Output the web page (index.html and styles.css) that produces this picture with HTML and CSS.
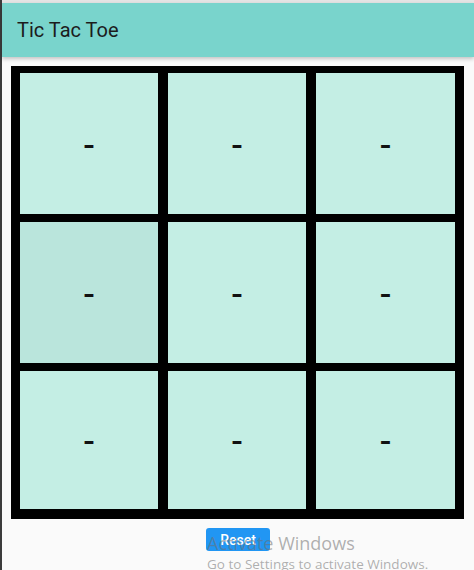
FILE: index.html
```html
<!DOCTYPE html>
<html>
<head>
<meta charset="utf-8">
<title>Tic Tac Toe</title>
<link rel="stylesheet" href="styles.css">
</head>
<body>
<div class="edge"></div>
<div class="app">
  <div class="topline"></div>
  <header class="appbar">Tic Tac Toe</header>
  <main class="content">
    <div class="board">
      <div class="cell">-</div>
      <div class="cell">-</div>
      <div class="cell">-</div>
      <div class="cell hover">-</div>
      <div class="cell">-</div>
      <div class="cell">-</div>
      <div class="cell">-</div>
      <div class="cell">-</div>
      <div class="cell">-</div>
    </div>
    <button class="reset">Reset</button>
  </main>
  <div class="watermark">
    <div class="wm-title">Activate Windows</div>
    <div class="wm-sub">Go to Settings to activate Windows.</div>
  </div>
</div>
</body>
</html>
```
FILE: styles.css
```css
html, body {
  margin: 0;
  padding: 0;
  height: 100%;
}
body {
  display: flex;
  background: #fafafa;
  font-family: Roboto, "Liberation Sans", sans-serif;
  overflow: hidden;
}
.edge {
  width: 2px;
  flex: none;
  background: #3c3c3c;
}
.app {
  flex: 1;
  position: relative;
  display: flex;
  flex-direction: column;
}
.topline {
  height: 3px;
  background: #e4e4e4;
}
.appbar {
  height: 54px;
  background: #79d4cc;
  color: #1c1c1c;
  font-size: 20px;
  line-height: 54px;
  padding-left: 15px;
  box-shadow: 0 2px 4px rgba(0, 0, 0, 0.22);
  position: relative;
  z-index: 1;
}
.content {
  display: flex;
  flex-direction: column;
  align-items: flex-start;
  padding: 9px 0 0 9px;
}
.board {
  display: grid;
  grid-template-columns: 138px 138px 139px;
  grid-template-rows: 141px 141px 138px;
  column-gap: 10px;
  row-gap: 8px;
  padding: 7px 9px 10px 9px;
  background: #000;
}
.cell {
  background: #c4eee4;
  display: flex;
  align-items: center;
  justify-content: center;
  font-size: 34px;
  font-weight: 500;
  color: #111;
  padding-top: 2px;
  box-sizing: border-box;
}
.cell.hover {
  background: #bae5dc;
}
.reset {
  align-self: center;
  margin: 9px 0 0 -9px;
  width: 64px;
  height: 23px;
  border: none;
  border-radius: 3px;
  background: #2196f3;
  color: #fff;
  font-family: Roboto, "Liberation Sans", sans-serif;
  font-size: 14px;
  font-weight: 500;
  padding: 0;
}
.watermark {
  position: absolute;
  left: 205px;
  top: 531px;
  color: rgba(110, 110, 110, 0.55);
  font-family: "Open Sans", "Noto Sans", sans-serif;
  pointer-events: none;
  white-space: nowrap;
}
.wm-title {
  font-size: 18px;
  line-height: 24px;
}
.wm-sub {
  font-size: 13.5px;
  line-height: 18px;
  margin-top: 0;
}
```
